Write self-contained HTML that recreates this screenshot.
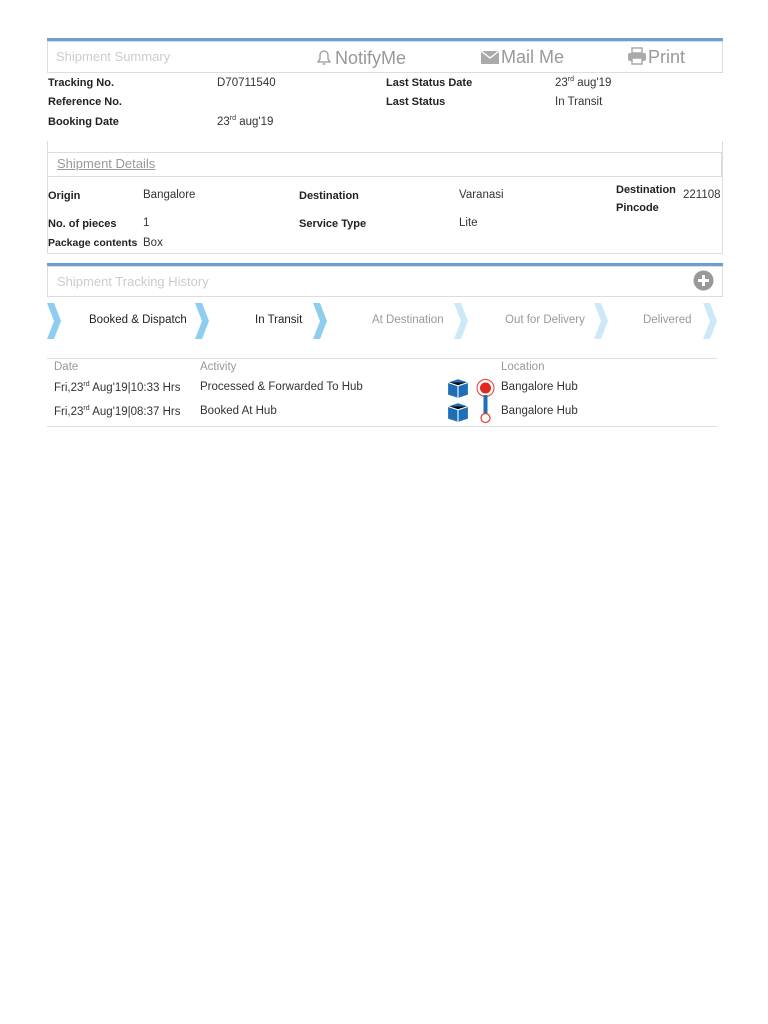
<!DOCTYPE html>
<html><head><meta charset="utf-8"><style>
*{margin:0;padding:0;box-sizing:border-box}
body{width:768px;height:1024px;background:#fff;font-family:"Liberation Sans",sans-serif;font-size:11.5px;color:#333;position:relative}
.a{position:absolute;white-space:nowrap}
.b{font-weight:bold;color:#222;font-size:11px}
.g{color:#999}
sup{font-size:7px;vertical-align:5px}
.bar{position:absolute;left:47px;width:676px;height:3px;background:#6c9fd3}
.box{position:absolute;border:1px solid #ddd}
.chev{position:absolute;top:303px;width:14px;height:36px}
</style></head><body>
<div class="bar" style="top:38px"></div>
<div class="box" style="left:47px;top:41px;width:676px;height:32px"></div>
<div class="a" style="left:56px;top:49px;font-size:13px;color:#ccc">Shipment Summary</div>
<div class="a" style="left:313px;top:47px;font-size:18px;color:#999">
<svg width="22" height="20" viewBox="0 0 20 20" style="vertical-align:-3px"><path d="M4 15h12l-2-3V8a4 4 0 0 0-8 0v4z M8.5 17h3" fill="none" stroke="#999" stroke-width="1.3"/></svg>NotifyMe</div>
<div class="a" style="left:479px;top:47px;font-size:18px;color:#999">
<svg width="22" height="16" viewBox="0 0 20 16" style="vertical-align:-2px"><rect x="1" y="2" width="18" height="13" fill="#aaa"/><path d="M1 2l9 7 9-7" fill="none" stroke="#fff" stroke-width="1.3"/></svg>Mail Me</div>
<div class="a" style="left:626px;top:47px;font-size:18px;color:#999">
<svg width="22" height="18" viewBox="0 0 20 18" style="vertical-align:-2px"><rect x="5" y="1" width="10" height="5" fill="none" stroke="#aaa" stroke-width="1.5"/><rect x="1" y="6" width="18" height="8" rx="2" fill="#aaa"/><rect x="5" y="11" width="10" height="6" fill="#fff" stroke="#aaa" stroke-width="1.5"/></svg>Print</div>

<div class="a b" style="left:48px;top:77px">Tracking No.</div>
<div class="a" style="left:217px;top:77px">D70711540</div>
<div class="a b" style="left:386px;top:77px">Last Status Date</div>
<div class="a" style="left:555px;top:76px">23<sup>rd</sup> aug'19</div>
<div class="a b" style="left:48px;top:96px">Reference No.</div>
<div class="a b" style="left:386px;top:96px">Last Status</div>
<div class="a" style="left:555px;top:96px">In Transit</div>
<div class="a b" style="left:48px;top:116px">Booking Date</div>
<div class="a" style="left:217px;top:115px">23<sup>rd</sup> aug'19</div>

<div class="box" style="left:47px;top:141px;width:676px;height:113px;border-top:none"></div>
<div class="box" style="left:47px;top:152px;width:675px;height:25px"></div>
<div class="a" style="left:57px;top:156px;font-size:13px;color:#999;text-decoration:underline">Shipment Details</div>
<div class="a b" style="left:48px;top:190px">Origin</div>
<div class="a" style="left:143px;top:189px">Bangalore</div>
<div class="a b" style="left:299px;top:190px">Destination</div>
<div class="a" style="left:459px;top:189px">Varanasi</div>
<div class="a b" style="left:616px;top:181px;line-height:18px">Destination<br>Pincode</div>
<div class="a" style="left:683px;top:189px">221108</div>
<div class="a b" style="left:48px;top:218px">No. of pieces</div>
<div class="a" style="left:143px;top:217px">1</div>
<div class="a b" style="left:299px;top:218px">Service Type</div>
<div class="a" style="left:459px;top:217px">Lite</div>
<div class="a b" style="left:48px;top:237px;font-size:10.5px">Package contents</div>
<div class="a" style="left:143px;top:237px">Box</div>

<div class="bar" style="top:263px"></div>
<div class="box" style="left:47px;top:266px;width:676px;height:31px"></div>
<div class="a" style="left:57px;top:274px;font-size:13px;color:#ccc">Shipment Tracking History</div>
<svg class="a" style="left:693px;top:270px" width="21" height="21" viewBox="0 0 21 21"><circle cx="10.5" cy="10.5" r="10" fill="#999"/><path d="M10.5 5v11M5 10.5h11" stroke="#fff" stroke-width="3"/></svg>

<svg class="chev" style="left:47px" viewBox="0 0 14 36"><path d="M0 0h7l7 18-7 18H0l7-18z" fill="#8fcdf0"/></svg>
<svg class="chev" style="left:195px" viewBox="0 0 14 36"><path d="M0 0h7l7 18-7 18H0l7-18z" fill="#8fcdf0"/></svg>
<svg class="chev" style="left:313px" viewBox="0 0 14 36"><path d="M0 0h7l7 18-7 18H0l7-18z" fill="#8fcdf0"/></svg>
<svg class="chev" style="left:454px" viewBox="0 0 14 36"><path d="M0 0h7l7 18-7 18H0l7-18z" fill="#cde9f8"/></svg>
<svg class="chev" style="left:594px" viewBox="0 0 14 36"><path d="M0 0h7l7 18-7 18H0l7-18z" fill="#cde9f8"/></svg>
<svg class="chev" style="left:703px" viewBox="0 0 14 36"><path d="M0 0h7l7 18-7 18H0l7-18z" fill="#cde9f8"/></svg>
<div class="a" style="left:89px;top:314px;color:#222">Booked &amp; Dispatch</div>
<div class="a" style="left:255px;top:314px;color:#222">In Transit</div>
<div class="a g" style="left:372px;top:314px">At Destination</div>
<div class="a g" style="left:505px;top:314px">Out for Delivery</div>
<div class="a g" style="left:643px;top:314px">Delivered</div>

<div class="box" style="left:47px;top:358px;width:670px;height:69px;border-left:none;border-right:none"></div>
<div class="a g" style="left:54px;top:361px">Date</div>
<div class="a g" style="left:200px;top:361px">Activity</div>
<div class="a g" style="left:501px;top:361px">Location</div>
<div class="a" style="left:54px;top:381px">Fri,23<sup>rd</sup> Aug'19|10:33 Hrs</div>
<div class="a" style="left:200px;top:381px">Processed &amp; Forwarded To Hub</div>
<div class="a" style="left:501px;top:381px">Bangalore Hub</div>
<div class="a" style="left:54px;top:405px">Fri,23<sup>rd</sup> Aug'19|08:37 Hrs</div>
<div class="a" style="left:200px;top:405px">Booked At Hub</div>
<div class="a" style="left:501px;top:405px">Bangalore Hub</div>
<svg class="a" style="left:447px;top:377px" width="22" height="22" viewBox="0 0 20 20"><path d="M1 5l9-3 9 3v11l-9 3-9-3z" fill="#1f6fb8"/><path d="M1 5l9 3 9-3M10 8v11" stroke="#fff" stroke-width="1"/></svg>
<svg class="a" style="left:447px;top:401px" width="22" height="22" viewBox="0 0 20 20"><path d="M1 5l9-3 9 3v11l-9 3-9-3z" fill="#1f6fb8"/><path d="M1 5l9 3 9-3M10 8v11" stroke="#fff" stroke-width="1"/></svg>
<svg class="a" style="left:475px;top:378px" width="22" height="48" viewBox="0 0 22 48"><circle cx="10.5" cy="10" r="8.5" fill="none" stroke="#e03a2f" stroke-width="1"/><circle cx="10.5" cy="10" r="5.5" fill="#e02a1f"/><rect x="8.5" y="17" width="4" height="19" fill="#1f6fb8"/><circle cx="10.5" cy="40" r="4.5" fill="#fff" stroke="#e03a2f" stroke-width="1.2"/></svg>
</body></html>
